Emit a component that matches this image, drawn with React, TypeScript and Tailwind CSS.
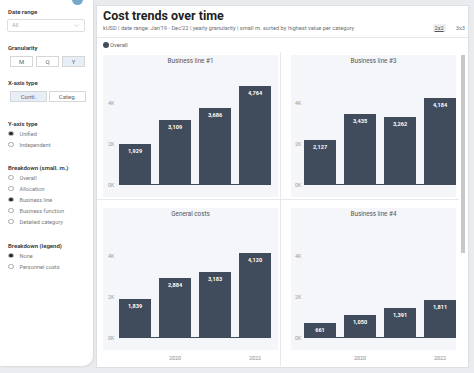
import React from 'react';
import { ChevronDown } from 'lucide-react';

type Chart = { title: string; values: number[] };

const charts: Chart[] = [
  { title: 'Business line #1', values: [1929, 3109, 3686, 4764] },
  { title: 'Business line #3', values: [2127, 3435, 3262, 4184] },
  { title: 'General costs', values: [1839, 2884, 3183, 4120] },
  { title: 'Business line #4', values: [661, 1050, 1391, 1811] },
];

// 82px on screen for 4K
const pxPerUnit = 82 / 4000;

const Radio = ({ label, checked }: { label: string; checked?: boolean }) => (
  <div className="h-[11px] flex items-center gap-[6px] pl-[8px]">
    <span className="w-[5.5px] h-[5.5px] rounded-full border-[0.8px] border-[#a8a8a8] flex items-center justify-center bg-white">
      {checked && <span className="w-[3.5px] h-[3.5px] rounded-full bg-[#222]" />}
    </span>
    <span className="text-[5.6px] text-[#7a7a7a] leading-[8px]">{label}</span>
  </div>
);

const Label = ({ children, className = '' }: { children: React.ReactNode; className?: string }) => (
  <div className={`text-[6px] leading-[8px] font-semibold text-[#333] ${className}`}>{children}</div>
);

const Sidebar = () => (
  <div className="w-[93px] h-[366px] bg-white rounded-br-[10px] shrink-0 pt-[8px] shadow-[1px_1px_2px_rgba(0,0,0,0.08)]">
    <Label className="pl-[8px]">Date range</Label>
    <div className="mt-[3px] ml-[7px] w-[78px] h-[13px] border border-[#dedede] rounded-[2px] flex items-center justify-between px-[4px]">
      <span className="text-[5.6px] text-[#aaa]">All</span>
      <ChevronDown size={7} color="#9a9a9a" strokeWidth={1.5} />
    </div>

    <Label className="pl-[8px] mt-[12px]">Granularity</Label>
    <div className="mt-[4px] ml-[10px] flex gap-[3px]">
      {['M', 'Q', 'Y'].map((g) => (
        <div
          key={g}
          className={`w-[23px] h-[11px] border border-[#d6d6d6] flex items-center justify-center text-[6px] text-[#666] ${g === 'Y' ? 'bg-[#e7eef7]' : 'bg-white'}`}
        >
          {g}
        </div>
      ))}
    </div>

    <Label className="pl-[8px] mt-[12px]">X-axis type</Label>
    <div className="mt-[4px] ml-[10px] flex gap-[2px]">
      <div className="w-[37px] h-[11px] border border-[#d6d6d6] bg-[#e7eef7] flex items-center justify-center text-[6px] text-[#666]">Conti.</div>
      <div className="w-[37px] h-[11px] border border-[#d6d6d6] bg-white flex items-center justify-center text-[6px] text-[#666]">Categ.</div>
    </div>

    <Label className="pl-[8px] mt-[18px]">Y-axis type</Label>
    <Radio label="Unified" checked />
    <Radio label="Independent" />

    <Label className="pl-[8px] mt-[14px]">Breakdown (small. m.)</Label>
    <Radio label="Overall" />
    <Radio label="Allocation" />
    <Radio label="Business line" checked />
    <Radio label="Business function" />
    <Radio label="Detailed category" />

    <Label className="pl-[8px] mt-[15px]">Breakdown (legend)</Label>
    <Radio label="None" checked />
    <Radio label="Personnel costs" />
  </div>
);

const ChartBox = ({ chart, wide }: { chart: Chart; wide: boolean }) => (
  <div className={`flex flex-col bg-[#f5f6f9] h-[142px] ${wide ? 'w-[175px]' : 'w-[165px]'}`}>
    <div className="h-[14px] flex items-center justify-center text-[6.3px] text-[#555]">{chart.title}</div>
    <div className="flex h-[116px]">
      <div className={`${wide ? 'w-[16px] pl-[5px]' : 'w-[13px] pl-[4px]'} flex flex-col text-[5.4px] text-[#9a9a9a] leading-[8px] shrink-0`}>
        <span className="mt-[30px] h-[8px]">4K</span>
        <span className="mt-[33px] h-[8px]">2K</span>
        <span className="mt-[33px] h-[8px]">0K</span>
      </div>
      <div className="flex items-end gap-[8px] h-full border-b border-[#404b5b]">
        {chart.values.map((v) => (
          <div
            key={v}
            className="w-[32px] bg-[#404b5b] flex justify-center"
            style={{ height: `${Math.round(v * pxPerUnit)}px` }}
          >
            <span className="mt-[4px] text-[5.6px] leading-[7px] font-bold text-white">{v.toLocaleString('en-US')}</span>
          </div>
        ))}
      </div>
    </div>
  </div>
);

const XAxis = ({ wide }: { wide: boolean }) => (
  <div className="flex h-[16px] items-center">
    <div className={wide ? 'w-[16px]' : 'w-[13px]'} />
    <div className="flex gap-[8px] text-[5.4px] text-[#8a8a8a]">
      {['', '2020', '', '2022'].map((y, i) => (
        <span key={i} className="w-[32px] text-center">{y}</span>
      ))}
    </div>
  </div>
);

export default function App() {
  return (
    <div className="relative w-[474px] h-[373px] bg-[#e9ebee] overflow-hidden flex font-['Roboto',sans-serif]">
      <div className="absolute left-[72px] top-[-6px] w-[11px] h-[11px] rounded-full bg-[#74a8c8]" />
      <Sidebar />

      <div className="ml-[3px] mt-[5px] w-[373px] h-[363px] bg-white border border-[#dcdfe3] flex flex-col">
        {/* header */}
        <div className="h-[32px] border-b border-[#e6e8eb] pl-[6px] pr-[3px]">
          <div className="mt-[3px] text-[12.5px] leading-[13px] font-bold text-[#222]">Cost trends over time</div>
          <div className="mt-[2px] flex items-center justify-between h-[8px]">
            <span className="text-[5.7px] text-[#6f6f6f] leading-[8px]">
              kUSD | date range: Jan'19 - Dec'22 | yearly granularity | small m. sorted by highest value per category
            </span>
            <div className="flex items-center">
              <span className="px-[2px] bg-[#eceef1] text-[5.7px] text-[#555] underline leading-[8px]">2x2</span>
              <span className="ml-[10px] text-[5.7px] text-[#777] leading-[8px]">3x3</span>
            </div>
          </div>
        </div>

        {/* legend */}
        <div className="h-[14px] flex items-center gap-[1px] pl-[6px]">
          <span className="w-[6px] h-[6px] rounded-full bg-[#404b5b]" />
          <span className="text-[5.8px] text-[#666]">Overall</span>
        </div>

        {/* small multiples */}
        <div className="flex">
          <div className="grid grid-cols-[184px_178px]">
            <div className="h-[148px] border-b border-r border-[#e6e8eb] pt-[3px] pl-[6px]">
              <ChartBox chart={charts[0]} wide />
            </div>
            <div className="h-[148px] border-b border-[#e6e8eb] pt-[3px] pl-[10px]">
              <ChartBox chart={charts[1]} wide={false} />
            </div>
            <div className="h-[166px] border-r border-[#e6e8eb] pt-[8px] pl-[6px]">
              <ChartBox chart={charts[2]} wide />
              <XAxis wide />
            </div>
            <div className="h-[166px] pt-[8px] pl-[10px]">
              <ChartBox chart={charts[3]} wide={false} />
              <XAxis wide={false} />
            </div>
          </div>
          <div className="ml-[2px] pt-[3px]">
            <div className="w-[3.5px] h-[198px] bg-[#c8c8c8]" />
          </div>
        </div>
      </div>
    </div>
  );
}
